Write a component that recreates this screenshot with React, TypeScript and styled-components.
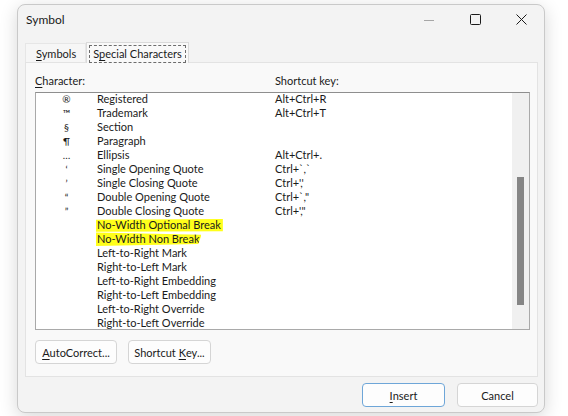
import React from 'react'
import styled, { createGlobalStyle } from 'styled-components'

const Global = createGlobalStyle`
  html, body {
    margin: 0;
    padding: 0;
    background: #ffffff;
  }
  body {
    width: 568px;
    height: 416px;
    overflow: hidden;
    font-family: "Segoe UI", Lato, "Noto Sans", sans-serif;
    font-size: 11px;
    color: #1a1a1a;
  }
`

const Desktop = styled.div`
  padding: 4px 0 0 17px;
`

const Window = styled.div`
  width: 528px;
  height: 409px;
  box-sizing: border-box;
  background: #f3f3f3;
  border: 1px solid #c9c9c9;
  border-radius: 8px;
  box-shadow: 0 4px 18px rgba(0, 0, 0, 0.16);
  display: flex;
  flex-direction: column;
  overflow: hidden;
`

const TitleBar = styled.div`
  height: 29px;
  display: flex;
  align-items: center;
  justify-content: space-between;
  padding-left: 8px;
`

const Title = styled.div`
  font-size: 12px;
  color: #1a1a1a;
`

const Controls = styled.div`
  display: flex;
  height: 100%;
`

const CtlButton = styled.div`
  width: 46px;
  height: 100%;
  display: flex;
  align-items: center;
  justify-content: center;
`

const Body = styled.div`
  flex: 1;
  display: flex;
  flex-direction: column;
  padding: 7px 6px 0 7px;
`

const TabStrip = styled.div`
  display: flex;
  align-items: flex-end;
  height: 21px;
`

const Tab = styled.div<{ $active?: boolean }>`
  height: ${p => (p.$active ? '21px' : '19px')};
  box-sizing: border-box;
  padding: ${p => (p.$active ? '2px 2px 0' : '0 9px 0 10px')};
  display: flex;
  align-items: center;
  background: ${p => (p.$active ? '#f9f9f9' : '#f6f6f6')};
  border: 1px solid ${p => (p.$active ? '#dadada' : '#e6e6e6')};
  border-bottom: none;
  margin-bottom: ${p => (p.$active ? '-1px' : '0')};
  position: relative;
  z-index: ${p => (p.$active ? 1 : 0)};
  color: #1a1a1a;
`

const FocusRing = styled.span`
  display: block;
  padding: 1px 4px 2px;
  outline: 1px dashed #6d6d6d;
  outline-offset: -1px;
  line-height: 15px;
`

const Panel = styled.div`
  height: 315px;
  box-sizing: border-box;
  background: #f9f9f9;
  border: 1px solid #e3e3e3;
  padding: 8px 7px 0 9px;
  display: flex;
  flex-direction: column;
`

const Labels = styled.div`
  display: grid;
  grid-template-columns: 240px 1fr;
  height: 21px;
  align-items: center;
  line-height: 14px;
  padding-bottom: 1px;
  box-sizing: border-box;
`

const ListBox = styled.div`
  height: 238px;
  box-sizing: border-box;
  background: #ffffff;
  border: 1px solid #a9a9a9;
  border-top-color: #8e8e8e;
  display: flex;
  overflow: hidden;
`

const Rows = styled.div`
  flex: 1;
  margin-top: -1px;
`

const Row = styled.div`
  display: grid;
  grid-template-columns: 61px 178px 1fr;
  height: 14px;
  line-height: 14px;
  align-items: center;
`

const Sym = styled.span`
  text-align: center;
  font-size: 10px;
`

const Name = styled.span<{ $mark?: 'top' | 'bottom' }>`
  justify-self: start;
  margin-left: -1px;
  padding: 0 2px 0 1px;
  ${p =>
    p.$mark === 'top' &&
    `background: #ffff1a;
     clip-path: polygon(0 12%, 100% 8%, 100% 94%, 0 98%);`}
  ${p =>
    p.$mark === 'bottom' &&
    `background: #ffff1a;
     clip-path: polygon(0 4%, 100% 20%, 97% 86%, 0 100%);`}
`

const Track = styled.div`
  width: 17px;
  background: #f0f0f0;
  display: flex;
  justify-content: center;
  padding-top: 84px;
  box-sizing: border-box;
`

const Thumb = styled.div`
  width: 7px;
  height: 128px;
  background: #858585;
`

const PanelButtons = styled.div`
  display: flex;
  gap: 11px;
  margin-top: 10px;
`

const Button = styled.div<{ $primary?: boolean; $width?: number }>`
  width: ${p => p.$width ?? 82}px;
  height: 24px;
  box-sizing: border-box;
  display: flex;
  align-items: center;
  justify-content: center;
  background: #fdfdfd;
  border: 1px solid ${p => (p.$primary ? '#6ea6d8' : '#d5d5d5')};
  border-radius: 4px;
  color: #1a1a1a;
`

const Footer = styled.div`
  display: flex;
  justify-content: flex-end;
  gap: 12px;
  margin-top: 6px;
`

const U = styled.span`
  text-decoration: underline;
  text-underline-offset: 2px;
`

type Item = { sym: string; name: string; key: string; mark?: 'top' | 'bottom' }

const items: Item[] = [
  { sym: '®', name: 'Registered', key: 'Alt+Ctrl+R' },
  { sym: '™', name: 'Trademark', key: 'Alt+Ctrl+T' },
  { sym: '§', name: 'Section', key: '' },
  { sym: '¶', name: 'Paragraph', key: '' },
  { sym: '…', name: 'Ellipsis', key: 'Alt+Ctrl+.' },
  { sym: '‘', name: 'Single Opening Quote', key: 'Ctrl+`,`' },
  { sym: '’', name: 'Single Closing Quote', key: "Ctrl+','" },
  { sym: '“', name: 'Double Opening Quote', key: 'Ctrl+`,"' },
  { sym: '”', name: 'Double Closing Quote', key: "Ctrl+'," + '"' },
  { sym: '', name: 'No-Width Optional Break', key: '', mark: 'top' },
  { sym: '', name: 'No-Width Non Break', key: '', mark: 'bottom' },
  { sym: '', name: 'Left-to-Right Mark', key: '' },
  { sym: '', name: 'Right-to-Left Mark', key: '' },
  { sym: '', name: 'Left-to-Right Embedding', key: '' },
  { sym: '', name: 'Right-to-Left Embedding', key: '' },
  { sym: '', name: 'Left-to-Right Override', key: '' },
  { sym: '', name: 'Right-to-Left Override', key: '' },
]

const App = () => {
  return (
    <>
      <Global />
      <Desktop>
        <Window>
          <TitleBar>
            <Title>Symbol</Title>
            <Controls>
              <CtlButton>
                <svg width="10" height="10" viewBox="0 0 10 10">
                  <line x1="0" y1="5.5" x2="10" y2="5.5" stroke="#a6a6a6" strokeWidth="1" />
                </svg>
              </CtlButton>
              <CtlButton>
                <svg width="11" height="11" viewBox="0 0 11 11">
                  <rect x="0.5" y="0.5" width="10" height="10" rx="1" fill="none" stroke="#1a1a1a" strokeWidth="1" />
                </svg>
              </CtlButton>
              <CtlButton>
                <svg width="11" height="11" viewBox="0 0 11 11">
                  <path d="M0.5 0.5 L10.5 10.5 M10.5 0.5 L0.5 10.5" stroke="#1a1a1a" strokeWidth="1" />
                </svg>
              </CtlButton>
            </Controls>
          </TitleBar>
          <Body>
            <TabStrip>
              <Tab>
                <span><U>S</U>ymbols</span>
              </Tab>
              <Tab $active>
                <FocusRing>S<U>p</U>ecial Characters</FocusRing>
              </Tab>
            </TabStrip>
            <Panel>
              <Labels>
                <span><U>C</U>haracter:</span>
                <span>Shortcut key:</span>
              </Labels>
              <ListBox>
                <Rows>
                  {items.map(it => (
                    <Row key={it.name}>
                      <Sym>{it.sym}</Sym>
                      <Name $mark={it.mark}>{it.name}</Name>
                      <span>{it.key}</span>
                    </Row>
                  ))}
                </Rows>
                <Track>
                  <Thumb />
                </Track>
              </ListBox>
              <PanelButtons>
                <Button $width={82}><U>A</U>utoCorrect...</Button>
                <Button $width={83}>Shortcut&nbsp;<U>K</U>ey...</Button>
              </PanelButtons>
            </Panel>
            <Footer>
              <Button $primary $width={83}><U>I</U>nsert</Button>
              <Button $width={81}>Cancel</Button>
            </Footer>
          </Body>
        </Window>
      </Desktop>
    </>
  )
}

export default App
